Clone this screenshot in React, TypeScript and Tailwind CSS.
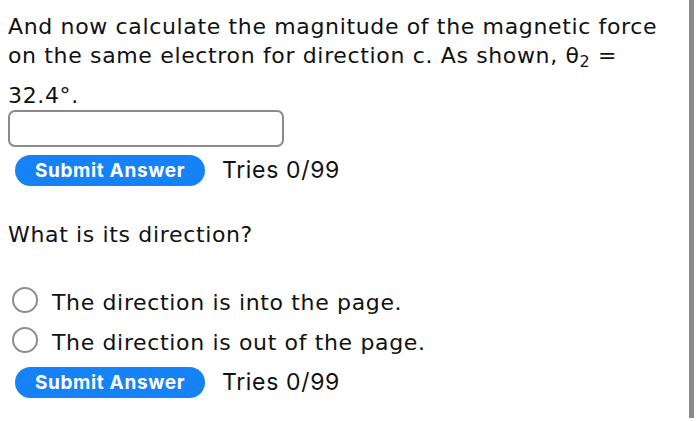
import React from 'react';

function SubmitRow({ className = '' }: { className?: string }) {
  return (
    <div className={`flex h-[31px] items-center ${className}`}>
      <button className="ml-[7px] h-[31px] w-[190px] rounded-full bg-[#1582f8] text-[19px] leading-none font-bold text-white font-['Inter',sans-serif]">
        Submit Answer
      </button>
      <span className="ml-[17px] text-[23px] leading-none text-[#111] font-['Inter',sans-serif]">Tries 0/99</span>
    </div>
  );
}

function Radio({ label }: { label: string }) {
  return (
    <label className="flex h-[40px] items-center">
      <span className="ml-[4px] mt-[-2px] h-[26px] w-[26px] rounded-full border-2 border-[#8e8e8e] bg-white" />
      <span className="ml-[14px] mt-[3px] leading-[29px]">{label}</span>
    </label>
  );
}

export default function App() {
  return (
    <div className="h-[418px] w-[694px] border-r-[5px] border-[#8a8a8a] bg-white pl-[8px] pt-[12px] text-[22px] tracking-[0.65px] text-[#111] font-['DejaVu_Sans',Verdana,sans-serif]">
      <div className="leading-[29px]">
        <div>And now calculate the magnitude of the magnetic force</div>
        <div className="mb-[11px]">
          on the same electron for direction c. As shown, θ<sub className="text-[16px]">2</sub> =
        </div>
        <div>32.4°.</div>
      </div>
      <input className="block h-[37px] w-[276px] rounded-[7px] border-2 border-[#8a8a8a] bg-white outline-none" />
      <SubmitRow className="mt-[8px]" />
      <div className="mt-[34px] leading-[29px]">What is its direction?</div>
      <div className="mt-[32px]">
        <Radio label="The direction is into the page." />
        <Radio label="The direction is out of the page." />
      </div>
      <SubmitRow className="mt-[6px]" />
    </div>
  );
}
